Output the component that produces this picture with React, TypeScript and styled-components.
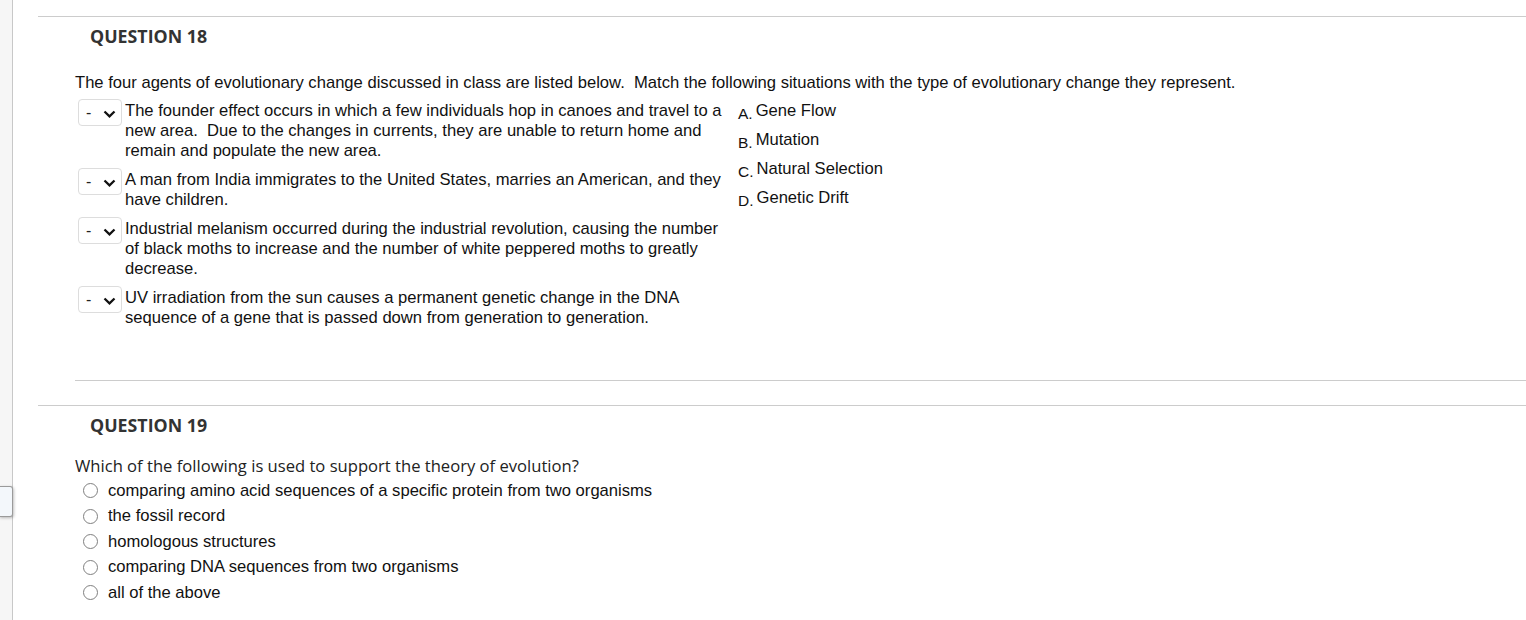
import React from "react";
import styled, { createGlobalStyle } from "styled-components";

const GlobalStyle = createGlobalStyle`
  html, body {
    margin: 0;
    padding: 0;
    background: #ffffff;
  }
  body {
    font-family: "Liberation Sans", Arial, sans-serif;
    color: #111;
  }
`;

const situations = [
  "The founder effect occurs in which a few individuals hop in canoes and travel to a new area.\u00a0 Due to the changes in currents, they are unable to return home and remain and populate the new area.",
  "A man from India immigrates to the United States, marries an American, and they have children.",
  "Industrial melanism occurred during the industrial revolution, causing the number of black moths to increase and the number of white peppered moths to greatly decrease.",
  "UV irradiation from the sun causes a permanent genetic change in the DNA sequence of a gene that is passed down from generation to generation.",
];

const answers = [
  { letter: "A.", text: "Gene Flow" },
  { letter: "B.", text: "Mutation" },
  { letter: "C.", text: "Natural Selection" },
  { letter: "D.", text: "Genetic Drift" },
];

const choices = [
  "comparing amino acid sequences of a specific protein from two organisms",
  "the fossil record",
  "homologous structures",
  "comparing DNA sequences from two organisms",
  "all of the above",
];

export default function App() {
  return (
    <>
      <GlobalStyle />
      <Page>
        <Sidebar>
          <SideTab />
        </Sidebar>
        <Main>
          <QuestionBlock>
            <Heading>QUESTION 18</Heading>
            <Body>
              <Prompt>
                The four agents of evolutionary change discussed in class are
                listed below.&nbsp; Match the following situations with the type
                of evolutionary change they represent.
              </Prompt>
              <MatchTable>
                <Situations>
                  {situations.map((s, i) => (
                    <SituationRow key={i}>
                      <SelectBox>
                        <Dash>-</Dash>
                        <svg width="13" height="8" viewBox="0 0 13 8">
                          <path
                            d="M1.5 1.5 L6.5 6.3 L11.5 1.5"
                            fill="none"
                            stroke="#111"
                            strokeWidth="2.3"
                          />
                        </svg>
                      </SelectBox>
                      <SituationText>{s}</SituationText>
                    </SituationRow>
                  ))}
                </Situations>
                <Answers>
                  {answers.map((a) => (
                    <AnswerRow key={a.letter}>
                      <Letter>{a.letter}</Letter>
                      {a.text}
                    </AnswerRow>
                  ))}
                </Answers>
              </MatchTable>
              <InnerRule />
            </Body>
          </QuestionBlock>
          <QuestionBlock>
            <Heading>QUESTION 19</Heading>
            <Body>
              <OpenPrompt>
                Which of the following is used to support the theory of
                evolution?
              </OpenPrompt>
              <Choices>
                {choices.map((c) => (
                  <ChoiceRow key={c}>
                    <Radio />
                    {c}
                  </ChoiceRow>
                ))}
              </Choices>
            </Body>
          </QuestionBlock>
        </Main>
      </Page>
    </>
  );
}

const Page = styled.div`
  display: flex;
  min-height: 620px;
  overflow: hidden;
`;

const Sidebar = styled.div`
  position: relative;
  flex: 0 0 12px;
  background: #f6f6f6;
  border-right: 1px solid #c8c8c8;
`;

const SideTab = styled.div`
  position: absolute;
  top: 486px;
  left: -1px;
  width: 13px;
  height: 29px;
  background: #f3f7fb;
  border: 1px solid #9a9a9a;
  border-left: none;
  border-radius: 0 3px 3px 0;
  box-shadow: 1px 1px 3px rgba(0, 0, 0, 0.25);
`;

const Main = styled.div`
  flex: 1;
  padding: 16px 0 0 25px;
`;

const QuestionBlock = styled.section`
  border-top: 1px solid #cccccc;
`;

const Heading = styled.h2`
  margin: 0 0 0 52px;
  padding-top: 7px;
  font-family: "Open Sans", sans-serif;
  font-weight: 700;
  font-size: 17.8px;
  line-height: 24px;
  color: #333333;
`;

const Body = styled.div`
  margin-left: 37px;
`;

const Prompt = styled.p`
  margin: 25px 0 6px;
  font-size: 16.6px;
  line-height: 20px;
  color: #111;
`;

const MatchTable = styled.div`
  display: flex;
  align-items: flex-start;
`;

const Situations = styled.div`
  display: flex;
  flex-direction: column;
  gap: 7px;
`;

const SituationRow = styled.div`
  display: flex;
  align-items: flex-start;
`;

const SelectBox = styled.div`
  box-sizing: border-box;
  display: flex;
  align-items: center;
  justify-content: space-between;
  width: 44px;
  height: 27px;
  margin-left: 3px;
  padding: 1px 5px 0 7px;
  border: 1px solid #dddddd;
  border-radius: 4px;
  background: #ffffff;
  font-size: 16px;

  svg {
    margin-top: 2px;
  }
`;

const Dash = styled.span`
  color: #222;
`;

const SituationText = styled.div`
  width: 602px;
  margin-left: 3px;
  padding-top: 2px;
  font-size: 16.6px;
  line-height: 20px;
  color: #111;
`;

const Answers = styled.div`
  display: flex;
  flex-direction: column;
  gap: 9px;
  margin-left: 11px;
  padding-top: 2px;
`;

const AnswerRow = styled.div`
  height: 20px;
  font-size: 16.6px;
  line-height: 20px;
  color: #111;
  white-space: nowrap;
`;

const Letter = styled.span`
  display: inline-block;
  margin-right: 3px;
  font-size: 15.5px;
  line-height: 14px;
  vertical-align: -3px;
`;

const InnerRule = styled.hr`
  margin: 52px 0 24px;
  border: none;
  border-top: 1px solid #cccccc;
`;

const OpenPrompt = styled.p`
  margin: 18px 0 0;
  font-family: "Open Sans", sans-serif;
  font-size: 16.6px;
  line-height: 22px;
  color: #222;
`;

const Choices = styled.div`
  display: flex;
  flex-direction: column;
  padding-top: 1px;
`;

const ChoiceRow = styled.label`
  display: flex;
  align-items: center;
  height: 25.5px;
  font-size: 16.6px;
  color: #111;
`;

const Radio = styled.span`
  box-sizing: border-box;
  width: 15px;
  height: 15px;
  margin: 0 10px 0 8px;
  border: 1px solid #808080;
  border-radius: 50%;
  background: #ffffff;
`;
